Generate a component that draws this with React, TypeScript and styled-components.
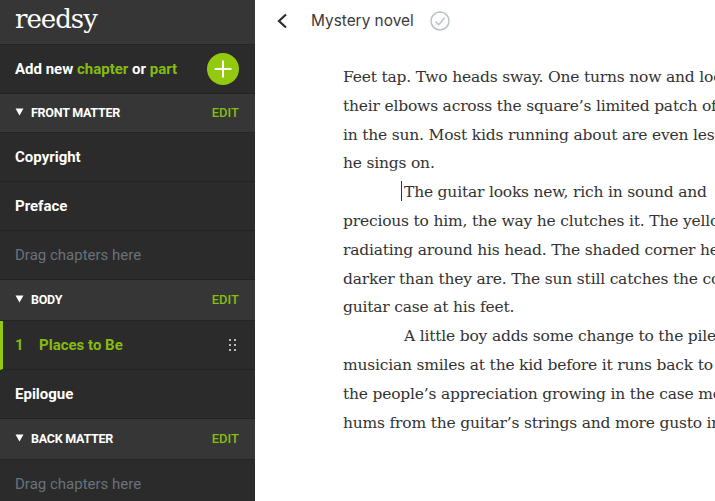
import React from 'react';
import styled, { createGlobalStyle } from 'styled-components';

const GlobalStyle = createGlobalStyle`
  html, body {
    margin: 0;
    height: 100%;
    overflow: hidden;
    background: #fff;
  }
  #root {
    height: 100%;
  }
`;

interface IPara {
  indent?: boolean;
  caret?: boolean;
  lines: string[];
}

const paragraphs: IPara[] = [
  {
    lines: [
      'Feet tap. Two heads sway. One turns now and looks',
      'their elbows across the square’s limited patch of',
      'in the sun. Most kids running about are even less',
      'he sings on.',
    ],
  },
  {
    indent: true,
    caret: true,
    lines: [
      'The guitar looks new, rich in sound and',
      'precious to him, the way he clutches it. The yellow',
      'radiating around his head. The shaded corner he',
      'darker than they are. The sun still catches the coins',
      'guitar case at his feet.',
    ],
  },
  {
    indent: true,
    lines: [
      'A little boy adds some change to the pile',
      'musician smiles at the kid before it runs back to',
      'the people’s appreciation growing in the case more',
      'hums from the guitar’s strings and more gusto in',
    ],
  },
];

function Arrow() {
  return (
    <svg width="9" height="8" viewBox="0 0 9 8">
      <path d="M0.5 0.5h8L4.5 7.5z" fill="#fff" />
    </svg>
  );
}

function Section({ title, first }: { title: string; first?: boolean }) {
  return (
    <SectionRow $first={!!first}>
      <SectionTitle>
        <Arrow />
        {title}
      </SectionTitle>
      <EditLink>EDIT</EditLink>
    </SectionRow>
  );
}

export default function App() {
  return (
    <Page>
      <GlobalStyle />
      <Sidebar>
        <Logo>
          <LogoText>reedsy</LogoText>
        </Logo>
        <AddRow>
          <span>
            Add new <Green>chapter</Green> or <Green>part</Green>
          </span>
          <AddBtn>
            <svg width="20" height="20" viewBox="0 0 20 20">
              <path d="M10 1.5v17M1.5 10h17" stroke="#fff" strokeWidth="2" />
            </svg>
          </AddBtn>
        </AddRow>
        <Section title="FRONT MATTER" first />
        <Chapter>Copyright</Chapter>
        <Chapter>Preface</Chapter>
        <DropHint>Drag chapters here</DropHint>
        <Section title="BODY" />
        <ActiveChapter>
          <ChapterNum>1</ChapterNum>
          <ChapterName>Places to Be</ChapterName>
          <svg width="7" height="12" viewBox="0 0 7 12">
            <path
              d="M0 0h2v2H0zM5 0h2v2H5zM0 5h2v2H0zM5 5h2v2H5zM0 10h2v2H0zM5 10h2v2H5z"
              fill="#b9b9b9"
            />
          </svg>
        </ActiveChapter>
        <Chapter>Epilogue</Chapter>
        <Section title="BACK MATTER" />
        <DropHint>Drag chapters here</DropHint>
      </Sidebar>
      <Main>
        <TopBar>
          <svg width="12" height="16" viewBox="0 0 12 16">
            <path d="M10 1.5L3 8l7 6.5" fill="none" stroke="#2b2b2b" strokeWidth="2.2" />
          </svg>
          <BookTitle>Mystery novel</BookTitle>
          <svg width="20" height="20" viewBox="0 0 20 20">
            <circle cx="10" cy="10" r="9" fill="none" stroke="#b8c2c6" strokeWidth="1.5" />
            <path d="M5.5 10.5l3.2 3.2 6-7" fill="none" stroke="#b8c2c6" strokeWidth="1.4" />
          </svg>
        </TopBar>
        <Editor>
          {paragraphs.map((p) =>
            p.lines.map((line, i) => (
              <Line key={line} $indent={!!p.indent && i === 0}>
                {p.caret && i === 0 && <Caret />}
                {line}
              </Line>
            )),
          )}
        </Editor>
      </Main>
    </Page>
  );
}

const Page = styled.div`
  display: flex;
  width: 715px;
  height: 501px;
  overflow: hidden;
`;

const Sidebar = styled.aside`
  flex: 0 0 255px;
  background: #2b2b2b;
  color: #fff;
  font-family: Roboto, 'Liberation Sans', sans-serif;
  font-size: 15px;
  font-weight: 700;
  overflow: hidden;
`;

const Logo = styled.div`
  height: 45px;
  padding-left: 15px;
  box-sizing: border-box;
  background: #363636;
  border-bottom: 1px solid #242424;
`;

const LogoText = styled.div`
  font-family: 'DejaVu Serif', serif;
  font-size: 26px;
  font-weight: 400;
  line-height: 38px;
  letter-spacing: -1px;
`;

const AddRow = styled.div`
  height: 49px;
  box-sizing: border-box;
  padding: 0 16px 0 15px;
  display: flex;
  align-items: center;
  justify-content: space-between;
  border-bottom: 1px solid #222;
`;

const Green = styled.span`
  color: #84bd0f;
`;

const AddBtn = styled.div`
  width: 32px;
  height: 32px;
  border-radius: 50%;
  background: #93c90e;
  display: flex;
  align-items: center;
  justify-content: center;
`;

const SectionRow = styled.div<{ $first: boolean }>`
  height: ${(props) => (props.$first ? '39px' : '41px')};
  box-sizing: border-box;
  padding: 0 16px 2px 15px;
  display: flex;
  align-items: center;
  justify-content: space-between;
  background: #363636;
  border-bottom: 1px solid #242424;
  font-size: 12.5px;
`;

const SectionTitle = styled.div`
  display: flex;
  align-items: center;
  gap: 7px;
  letter-spacing: -0.25px;
`;

const EditLink = styled.span`
  color: #84bd0f;
  font-size: 13px;
  font-weight: 500;
`;

const Chapter = styled.div`
  height: 49px;
  box-sizing: border-box;
  padding-left: 15px;
  display: flex;
  align-items: center;
  border-bottom: 1px solid #222;
`;

const DropHint = styled(Chapter)`
  color: #69727a;
  font-weight: 400;
`;

const ActiveChapter = styled(Chapter)`
  padding: 0 19px 0 12px;
  border-left: 3px solid #93c90e;
  color: #84bd0f;
`;

const ChapterNum = styled.span`
  width: 24px;
`;

const ChapterName = styled.span`
  flex: 1;
`;

const Main = styled.main`
  flex: 1;
  min-width: 0;
  overflow: hidden;
  background: #fff;
`;

const TopBar = styled.header`
  height: 41px;
  padding-left: 21px;
  display: flex;
  align-items: center;
  color: #3a3a3a;
`;

const BookTitle = styled.span`
  margin: 0 16px 0 23px;
  font-family: Inter, Roboto, sans-serif;
  font-size: 15.4px;
`;

const Editor = styled.div`
  padding: 22px 0 0 88px;
  width: 480px;
  font-family: 'DejaVu Serif', serif;
  font-size: 15.5px;
  line-height: 28.8px;
  color: #333;
  white-space: nowrap;
`;

const Line = styled.div<{ $indent: boolean }>`
  padding-left: ${(props) => (props.$indent ? '61px' : '0')};
  letter-spacing: -0.2px;
`;

const Caret = styled.span`
  display: inline-block;
  width: 1px;
  height: 20px;
  margin: 0 2px 0 -3px;
  vertical-align: text-bottom;
  background: #333;
`;
